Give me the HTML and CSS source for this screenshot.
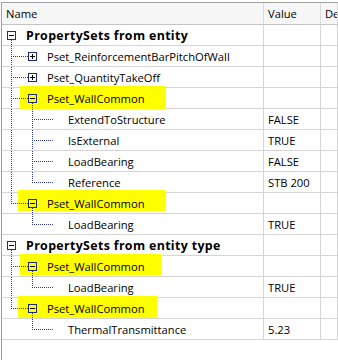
FILE: index.html
```html
<!DOCTYPE html>
<html lang="en">
<head>
  <meta charset="UTF-8" />
  <title>Property Sets</title>
  <link rel="stylesheet" href="styles.css">
</head>
<body>
  <div class="tree-list">
    <table class="grid">
      <colgroup>
        <col class="col-name">
        <col class="col-value">
        <col>
      </colgroup>
      <thead>
        <tr>
          <th>Name</th>
          <th>Value</th>
          <th>Description</th>
        </tr>
      </thead>
      <tbody>
        <tr>
          <td><div class="node"><span class="toggle open"><span class="box minus"></span></span><span class="label root">PropertySets from entity</span></div></td>
          <td></td><td></td>
        </tr>
        <tr>
          <td><div class="node"><span class="indent tee"></span><span class="toggle child"><span class="box plus"></span></span><span class="label">Pset_ReinforcementBarPitchOfWall</span></div></td>
          <td></td><td></td>
        </tr>
        <tr>
          <td><div class="node"><span class="indent tee"></span><span class="toggle child"><span class="box plus"></span></span><span class="label">Pset_QuantityTakeOff</span></div></td>
          <td></td><td></td>
        </tr>
        <tr>
          <td><div class="node"><span class="indent tee"></span><span class="mark m1"><span class="toggle child open"><span class="box minus"></span></span><span class="label">Pset_WallCommon</span></span></div></td>
          <td></td><td></td>
        </tr>
        <tr>
          <td><div class="node"><span class="indent pipe"></span><span class="indent tee"></span><span class="leaf"></span><span class="label">ExtendToStructure</span></div></td>
          <td>FALSE</td><td></td>
        </tr>
        <tr>
          <td><div class="node"><span class="indent pipe"></span><span class="indent tee"></span><span class="leaf"></span><span class="label">IsExternal</span></div></td>
          <td>TRUE</td><td></td>
        </tr>
        <tr>
          <td><div class="node"><span class="indent pipe"></span><span class="indent tee"></span><span class="leaf"></span><span class="label">LoadBearing</span></div></td>
          <td>FALSE</td><td></td>
        </tr>
        <tr>
          <td><div class="node"><span class="indent pipe"></span><span class="indent last"></span><span class="leaf"></span><span class="label">Reference</span></div></td>
          <td>STB 200</td><td></td>
        </tr>
        <tr>
          <td><div class="node"><span class="indent last"></span><span class="mark m2"><span class="toggle child open"><span class="box minus"></span></span><span class="label">Pset_WallCommon</span></span></div></td>
          <td></td><td></td>
        </tr>
        <tr>
          <td><div class="node"><span class="indent"></span><span class="indent last"></span><span class="leaf"></span><span class="label">LoadBearing</span></div></td>
          <td>TRUE</td><td></td>
        </tr>
        <tr>
          <td><div class="node"><span class="toggle open"><span class="box minus"></span></span><span class="label root">PropertySets from entity type</span></div></td>
          <td></td><td></td>
        </tr>
        <tr>
          <td><div class="node"><span class="indent tee"></span><span class="mark m3"><span class="toggle child open"><span class="box minus"></span></span><span class="label">Pset_WallCommon</span></span></div></td>
          <td></td><td></td>
        </tr>
        <tr>
          <td><div class="node"><span class="indent pipe"></span><span class="indent last"></span><span class="leaf"></span><span class="label">LoadBearing</span></div></td>
          <td>TRUE</td><td></td>
        </tr>
        <tr>
          <td><div class="node"><span class="indent last"></span><span class="mark m4"><span class="toggle child open"><span class="box minus"></span></span><span class="label">Pset_WallCommon</span></span></div></td>
          <td></td><td></td>
        </tr>
        <tr>
          <td><div class="node"><span class="indent"></span><span class="indent last"></span><span class="leaf"></span><span class="label">ThermalTransmittance</span></div></td>
          <td>5.23</td><td></td>
        </tr>
      </tbody>
    </table>
  </div>
</body>
</html>
```

FILE: styles.css
```css
html, body {
  margin: 0;
  background: #fff;
}
body {
  padding: 2px 0 0 1px;
  font-family: "Open Sans", "Noto Sans", sans-serif;
  font-size: 11.2px;
  color: #000;
  overflow: hidden;
}
.tree-list {
  height: 358px;
  border-top: 1px solid #a0a0a0;
  border-left: 1px solid #a0a0a0;
  overflow: hidden;
}
.grid {
  width: 100%;
  table-layout: fixed;
  border-collapse: separate;
  border-spacing: 0;
}
.col-name {
  width: 262px;
}
.col-value {
  width: 57px;
}
th, td {
  padding: 0 0 0 4px;
  text-align: left;
  white-space: nowrap;
  overflow: visible;
  border-right: 1px solid #d5d5d5;
  border-bottom: 1px solid #d5d5d5;
}
th {
  height: 21px;
  font-weight: normal;
  background: #f7f7f7;
  border-bottom-color: #c4c4c4;
  border-right-color: #dadada;
  overflow: hidden;
}
td {
  height: 20px;
}
td:first-child {
  padding: 0;
}

/* tree lines */
.node {
  display: flex;
  align-items: center;
  height: 20px;
}
.indent, .toggle, .leaf {
  flex: none;
  align-self: stretch;
  width: 21px;
  position: relative;
  z-index: 1;
}
.label {
  margin-left: 3px;
  position: relative;
  z-index: 1;
}
.label.root {
  font-weight: bold;
  font-size: 12.4px;
  letter-spacing: 0.35px;
}
.indent.pipe {
  background: repeating-linear-gradient(to bottom, #283593 0 1px, transparent 1px 2px) 9px 0 / 1px 100% no-repeat;
}
.indent.tee {
  background:
    repeating-linear-gradient(to bottom, #283593 0 1px, transparent 1px 2px) 9px 0 / 1px 100% no-repeat,
    repeating-linear-gradient(to right, #283593 0 1px, transparent 1px 2px) 9px 10px / 12px 1px no-repeat;
}
.indent.last {
  background:
    repeating-linear-gradient(to bottom, #283593 0 1px, transparent 1px 2px) 9px 0 / 1px 11px no-repeat,
    repeating-linear-gradient(to right, #283593 0 1px, transparent 1px 2px) 9px 10px / 12px 1px no-repeat;
}
.leaf {
  background: repeating-linear-gradient(to right, #283593 0 1px, transparent 1px 2px) 0 10px / 10px 1px no-repeat;
}
.toggle {
  display: flex;
  align-items: flex-start;
}
.toggle.open {
  background: repeating-linear-gradient(to bottom, #283593 0 1px, transparent 1px 2px) 9px 15px / 1px 5px no-repeat;
}
.toggle.child {
  background: repeating-linear-gradient(to right, #283593 0 1px, transparent 1px 2px) 0 10px / 5px 1px no-repeat;
}
.toggle.child.open {
  background:
    repeating-linear-gradient(to right, #283593 0 1px, transparent 1px 2px) 0 10px / 5px 1px no-repeat,
    repeating-linear-gradient(to bottom, #283593 0 1px, transparent 1px 2px) 9px 15px / 1px 5px no-repeat;
}
.box {
  box-sizing: border-box;
  width: 9px;
  height: 9px;
  margin: 6px 0 0 5px;
  border: 1px solid #1c2b80;
}
.box.minus {
  background: linear-gradient(#000, #000) center / 5px 1px no-repeat;
}
.box.plus {
  background:
    linear-gradient(#000, #000) center / 5px 1px no-repeat,
    linear-gradient(#000, #000) center / 1px 5px no-repeat;
}

/* marker highlight drawn over the rows */
.mark {
  display: flex;
  align-self: stretch;
  align-items: center;
  position: relative;
}
.mark::before {
  content: "";
  position: absolute;
  background: #ffff00;
}
.mark.m1::before {
  left: -3px;
  top: -2px;
  width: 146px;
  height: 23px;
}
.mark.m2::before {
  left: -5px;
  top: -3px;
  width: 148px;
  height: 21px;
}
.mark.m3::before {
  left: -3px;
  top: -2px;
  width: 142px;
  height: 21px;
}
.mark.m4::before {
  left: -5px;
  top: -2px;
  width: 139px;
  height: 22px;
}
```
